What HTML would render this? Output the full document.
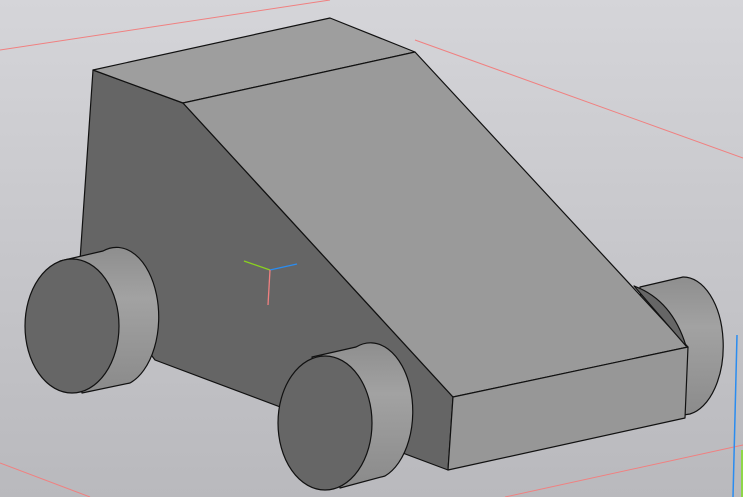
<!DOCTYPE html>
<html><head><style>html,body{margin:0;padding:0;width:743px;height:497px;overflow:hidden}</style></head>
<body>
<svg width="743" height="497" viewBox="0 0 743 497" xmlns="http://www.w3.org/2000/svg">
<defs>
<linearGradient id="bg" x1="0" y1="0" x2="0" y2="1"><stop offset="0" stop-color="#d5d5d9"/><stop offset="1" stop-color="#b9b9bd"/></linearGradient>
<linearGradient id="rim" x1="0" y1="0" x2="0" y2="1"><stop offset="0" stop-color="#8e8e8e"/><stop offset="0.35" stop-color="#a2a2a2"/><stop offset="1" stop-color="#8a8a8a"/></linearGradient>
</defs>
<rect width="743" height="497" fill="url(#bg)"/>
<g stroke="#f08080" stroke-width="1" fill="none">
<line x1="0" y1="50" x2="330" y2="0"/>
<line x1="415" y1="40" x2="743" y2="158"/>
<line x1="0" y1="463" x2="90" y2="497"/>
<line x1="505" y1="497" x2="743" y2="445"/>
</g>
<line x1="737" y1="335" x2="733" y2="497" stroke="#2a8cf0" stroke-width="1.5"/>
<line x1="742" y1="450" x2="742" y2="497" stroke="#80e020" stroke-width="1.5"/>
<g stroke="#111" stroke-width="1.2" stroke-linejoin="round">
<!-- rear wheel -->
<path d="M640,287 L683,277 A40,69 0 0 1 690,414 L650,420 Z" fill="url(#rim)"/>
<!-- body side -->
<path d="M93,70 L183,103 L453,397 L448,470 L155,360 L80,260 Z" fill="#656565"/>
<!-- top -->
<path d="M93,70 L330,18 L415,52 L183,103 Z" fill="#9e9e9e"/>
<!-- slope -->
<path d="M183,103 L415,52 L688,347 L453,397 Z" fill="#9a9a9a"/>
<path d="M634,286 Q672,300 686,346 Z" fill="#666"/>
<!-- front -->
<path d="M453,397 L688,347 L685,418 L448,470 Z" fill="#979797"/>
<!-- left wheel -->
<path d="M60,261 L103,251 A40,66 0 0 1 130,383 L82,393 Z" fill="url(#rim)"/>
<ellipse cx="72" cy="326" rx="47" ry="67" fill="#666"/>
<!-- front wheel -->
<path d="M312,357 L356,347 A40,65 0 0 1 385,476 L340,488 Z" fill="url(#rim)"/>
<ellipse cx="325" cy="423" rx="47" ry="67" fill="#666"/>
</g>
<g stroke-width="1.3">
<line x1="270" y1="270" x2="244" y2="261" stroke="#8ad020"/>
<line x1="270" y1="270" x2="297" y2="264" stroke="#2a8cf0"/>
<line x1="270" y1="270" x2="268" y2="305" stroke="#f08080"/>
</g>
</svg>
</body></html>
